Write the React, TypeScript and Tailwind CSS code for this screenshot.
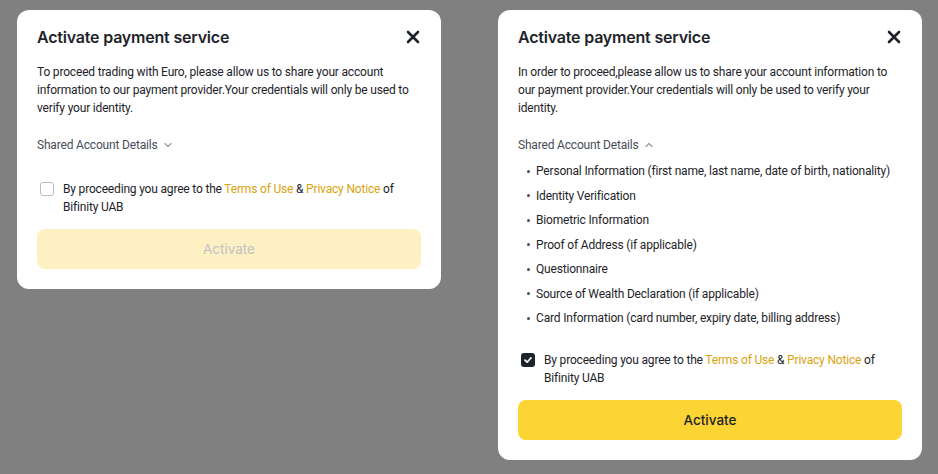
import { useState } from "react";

const BODY = { fontFamily: "Roboto, 'Noto Sans', sans-serif" };
const TITLE = { fontFamily: "Inter, 'Noto Sans', sans-serif" };

const details = [
  "Personal Information (first name, last name, date of birth, nationality)",
  "Identity Verification",
  "Biometric Information",
  "Proof of Address (if applicable)",
  "Questionnaire",
  "Source of Wealth Declaration (if applicable)",
  "Card Information (card number, expiry date, billing address)",
];

function CloseIcon() {
  return (
    <svg width="14" height="14" viewBox="0 0 14 14" fill="none">
      <path d="M2 2L12 12M12 2L2 12" stroke="#1E2329" strokeWidth="2.6" strokeLinecap="round" />
    </svg>
  );
}

function Chevron({ up }: { up?: boolean }) {
  return (
    <svg width="10" height="10" viewBox="0 0 10 10" fill="none" className="ml-[6px]">
      <path
        d={up ? "M2 6.5L5 3.5L8 6.5" : "M2 3.5L5 6.5L8 3.5"}
        stroke="#929AA5"
        strokeWidth="1.2"
        strokeLinecap="round"
        strokeLinejoin="round"
      />
    </svg>
  );
}

function Checkbox({ checked }: { checked: boolean }) {
  if (checked) {
    return (
      <span className="flex h-[14px] w-[14px] shrink-0 items-center justify-center rounded-[3px] bg-[#1E2329]">
        <svg width="10" height="10" viewBox="0 0 10 10" fill="none">
          <path d="M2 5.2L4.1 7.2L8 2.9" stroke="#fff" strokeWidth="1.7" strokeLinecap="round" strokeLinejoin="round" />
        </svg>
      </span>
    );
  }
  return <span className="block h-[14px] w-[14px] shrink-0 rounded-[3px] border border-[#B7BDC6] bg-white" />;
}

function PaymentModal({
  intro,
  expanded,
  checked,
}: {
  intro: string;
  expanded: boolean;
  checked: boolean;
}) {
  const [agree, setAgree] = useState(checked);
  return (
    <div
      className="w-[424px] rounded-[12px] bg-white px-5 pt-[15px] pb-5 text-[#1E2329] tracking-[-0.18px]"
      style={BODY}
    >
      <div className="flex h-6 items-center justify-between">
        <span className="text-[16px] font-semibold tracking-[-0.2px]" style={TITLE}>
          Activate payment service
        </span>
        <button className="mr-[1px]">
          <CloseIcon />
        </button>
      </div>
      <p className="mt-[14px] text-[12px] leading-[18px] text-[#1E2329]">{intro}</p>
      <div className="mt-[19px] flex h-[18px] items-center text-[12px] text-[#474D57]">
        Shared Account Details
        <Chevron up={expanded} />
      </div>
      {expanded && (
        <ul className="mt-2 flex flex-col gap-[6.5px] pl-[9px] text-[12px] text-[#1E2329]">
          {details.map((d) => (
            <li key={d} className="flex h-[18px] items-center">
              <span className="mr-[6px] h-[3px] w-[3px] shrink-0 rounded-full bg-[#474D57]" />
              {d}
            </li>
          ))}
        </ul>
      )}
      <label
        className={`flex items-start gap-[9px] pl-[3px] text-[12px] leading-[18px] text-[#1E2329] ${expanded ? "mt-6" : "mt-[26px]"}`}
        onClick={() => setAgree(!agree)}
      >
        <span className="mt-[2px] block">
          <Checkbox checked={agree} />
        </span>
        <span>
          By proceeding you agree to the <span className="text-[#D9A30E]">Terms of Use</span> &amp;{" "}
          <span className="text-[#D9A30E]">Privacy Notice</span> of Bifinity UAB
        </span>
      </label>
      <button
        className={`mt-[13px] h-10 w-full rounded-[8px] text-[13.5px] tracking-normal ${
          agree ? "bg-[#FCD535] font-medium text-[#1E2329]" : "bg-[#FDF0C2] text-[#BFC2C7]"
        }`}
        style={TITLE}
      >
        Activate
      </button>
    </div>
  );
}

export default function App() {
  return (
    <div className="flex h-[474px] w-[938px] items-start gap-[57px] bg-[#808080] pl-[17px] pt-[10px]">
      <PaymentModal
        intro="To proceed trading with Euro, please allow us to share your account information to our payment provider.Your credentials will only be used to verify your identity."
        expanded={false}
        checked={false}
      />
      <PaymentModal
        intro="In order to proceed,please allow us to share your account information to our payment provider.Your credentials will only be used to verify your identity."
        expanded
        checked
      />
    </div>
  );
}
